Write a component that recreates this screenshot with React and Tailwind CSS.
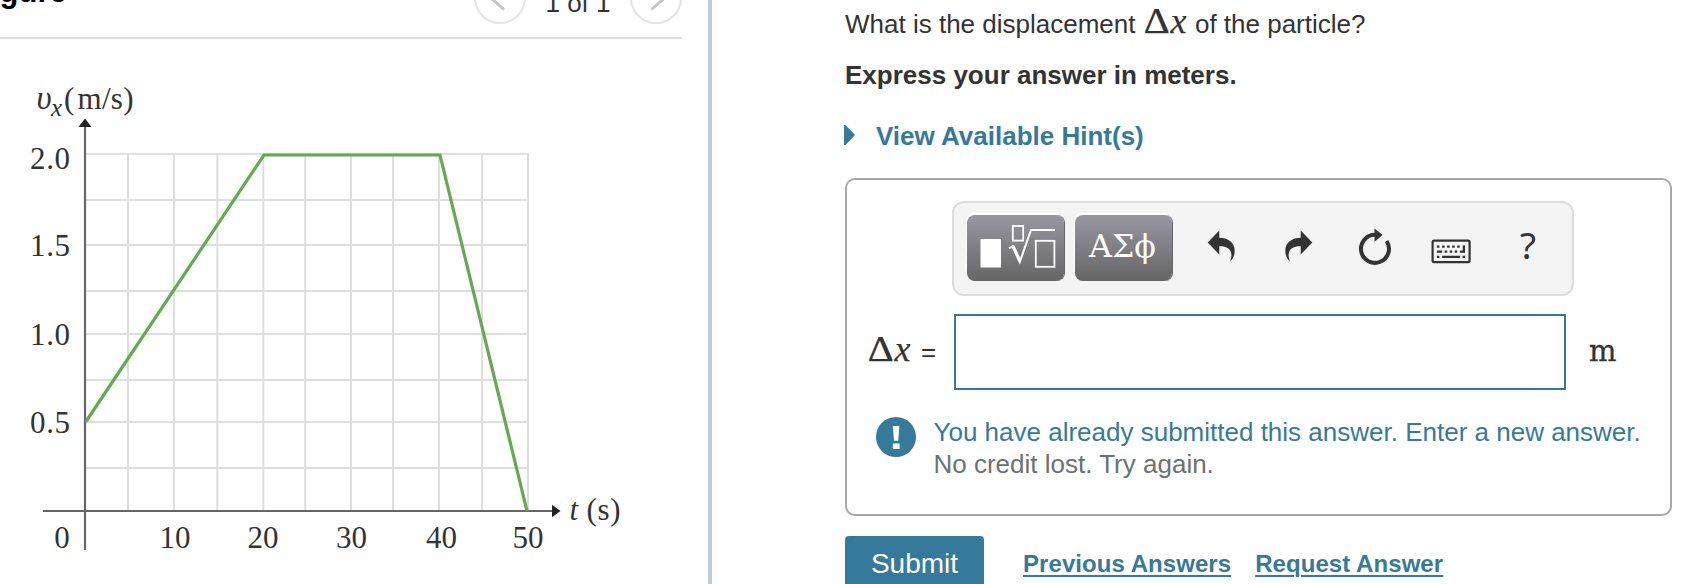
const SERIF = '"Liberation Serif", serif'
const MATH = '"DejaVu Math TeX Gyre", "Liberation Serif", serif'

const gridX = [128, 174, 217.3, 263.3, 305.2, 351, 393, 439, 482, 528]
const gridY = [154, 200, 245, 291, 334, 380, 422, 468]

const yLabels = [
  { text: '2.0', y: 168.5 },
  { text: '1.5', y: 256.3 },
  { text: '1.0', y: 344.8 },
  { text: '0.5', y: 433 },
]

const xLabels = [
  { text: '10', x: 175 },
  { text: '20', x: 263 },
  { text: '30', x: 351.5 },
  { text: '40', x: 441.5 },
  { text: '50', x: 528 },
]

function VelocityGraph() {
  return (
    <svg width="708" height="545" viewBox="0 39 708 545" fontFamily={SERIF} fontSize="31" fill="#333">
      {/* Grid */}
      <g stroke="#dedede" strokeWidth="2">
        {gridX.map((x) => (
          <line key={x} x1={x} y1="153" x2={x} y2="511" />
        ))}
        {gridY.map((y) => (
          <line key={y} x1="86" y1={y} x2="529" y2={y} />
        ))}
      </g>

      {/* Axes */}
      <g stroke="#666" strokeWidth="2.2">
        <line x1="85" y1="122" x2="85" y2="550" />
        <line x1="43" y1="511" x2="556" y2="511" />
      </g>
      <path d="M85 118.5L91.5 127H78.5Z" fill="#222" />
      <path d="M560.5 511L552 504.8V517.2Z" fill="#222" />

      {/* Data */}
      <path d="M86 421.5L264 155H440L527 511" fill="none" stroke="#63aa53" strokeWidth="3.2" />

      {/* Labels */}
      <text x="36.5" y="109" fontStyle="italic" fontSize="33">υ</text>
      <text x="51" y="115.5" fontStyle="italic" fontSize="25">x</text>
      <text x="64" y="109">(</text>
      <text x="77.5" y="109" textLength="56">m/s)</text>
      {yLabels.map((l) => (
        <text key={l.text} x="30" y={l.y} textLength="40">{l.text}</text>
      ))}
      <text x="62" y="548.3" textAnchor="middle">0</text>
      {xLabels.map((l) => (
        <text key={l.text} x={l.x} y="548.3" textAnchor="middle">{l.text}</text>
      ))}
      <text x="569.5" y="520" fontStyle="italic">t</text>
      <text x="586.5" y="520" textLength="34">(s)</text>
    </svg>
  )
}

function PagerButton({ d }) {
  return (
    <svg width="52" height="52" viewBox="0 0 52 52" fill="none">
      <circle cx="26" cy="26" r="25" stroke="#e4e4e4" strokeWidth="2" />
      <path d={d} stroke="#c4c4c4" strokeWidth="3" />
    </svg>
  )
}

function FigurePanel() {
  return (
    <section className="w-[708px] shrink-0 overflow-hidden">
      <header className="flex h-[39px] w-[682px] items-start justify-between border-b-2 border-[#ddd]">
        <h2 className="-ml-[28px] -mt-[25px] text-[31px] leading-[34px] font-bold text-black">Figure</h2>
        <div className="-mt-[28px] flex items-center">
          <PagerButton d="M30 14.5L17 26L30 37.5" />
          <span className="w-[104px] pt-[9px] text-center text-[26px] leading-[30px]">1 of 1</span>
          <PagerButton d="M21.5 14.5L34.5 26L21.5 37.5" />
        </div>
      </header>
      <VelocityGraph />
    </section>
  )
}

// Inline math symbol, sits on the text baseline
function DeltaX() {
  return (
    <svg className="inline overflow-visible align-baseline" width="43" height="23" viewBox="0 0 43 23" fontFamily={SERIF} fill="#333" stroke="#333" strokeWidth="0.25">
      <text x="-0.3" y="22.7" fontSize="35" textLength="26" lengthAdjust="spacingAndGlyphs">Δ</text>
      <text x="26.5" y="22.7" fontSize="36" fontStyle="italic">x</text>
    </svg>
  )
}

function TemplateButton() {
  return (
    <button className="h-[66px] w-[97px] rounded-[8px] bg-linear-to-b from-[#9997a1] to-[#666] shadow-[1px_0_0_#666,-1px_-2px_0_#fff]">
      <svg width="97" height="66" viewBox="0 0 97 66" fill="none" stroke="#fff">
        <rect x="13.5" y="24" width="20.5" height="28.5" fill="#fff" stroke="none" />
        <rect x="45.8" y="11" width="10.4" height="14.6" strokeWidth="1.8" />
        <path d="M42 33.5L46 31L52.8 47L64 15H88" strokeWidth="2" />
        <path d="M46 31L52.8 46" strokeWidth="3.2" />
        <rect x="68.8" y="25.8" width="18.6" height="26" strokeWidth="1.8" />
      </svg>
    </button>
  )
}

function GreekButton() {
  return (
    <button className="h-[66px] w-[97px] rounded-[8px] bg-linear-to-b from-[#9997a1] to-[#666] shadow-[1px_0_0_#666,-1px_-2px_0_#fff]">
      <svg width="97" height="66" viewBox="0 0 97 66" fill="#fff">
        <text x="14" y="42.3" fontFamily='"DejaVu Serif Condensed", "DejaVu Serif", serif' fontSize="32.5" textLength="67" lengthAdjust="spacingAndGlyphs">ΑΣϕ</text>
      </svg>
    </button>
  )
}

// Toolbar glyphs share a 40x40 box
function ToolIcon({ children }) {
  return (
    <svg className="overflow-visible" width="40" height="40" viewBox="0 0 40 40" fill="#333">
      {children}
    </svg>
  )
}

const ARROW = 'M6.7 14.5L18.3 2.5V9.8C27 9.8 33.7 14.5 33.7 22.8C33.7 27 32 31 29 33.8C30.5 29.5 31 26 29.5 23C28 20 24.5 18.2 18.3 18.2V26.5Z'

function Toolbar() {
  return (
    <div className="ml-[105px] flex h-[95px] w-[622px] items-center rounded-[12px] border-2 border-[#dcdcdc] bg-[#f4f4f4] pb-px pl-[13px]">
      <div className="flex gap-[11px]">
        <TemplateButton />
        <GreekButton />
      </div>
      <div className="ml-[29px] flex gap-[37px]">
        <ToolIcon>
          <path d={ARROW} />
        </ToolIcon>
        <ToolIcon>
          <path d={ARROW} transform="translate(41 0) scale(-1 1)" />
        </ToolIcon>
        <ToolIcon>
          <path d="M20 6.8A14 14 0 1 0 31.6 13" fill="none" stroke="#333" strokeWidth="4" />
          <path d="M19.5 0.5L27.6 7L19.5 13.8Z" />
        </ToolIcon>
        <ToolIcon>
          <g transform="translate(-0.6 1.6)" stroke="#333" fill="none">
            <rect x="1.2" y="11" width="37" height="21.5" rx="1.5" strokeWidth="2.2" />
            <path d="M5.5 17H8M10.7 17H13.2M15.7 17H18.2M20.8 17H23.3M25.8 17H28.3M5.5 22H10.8M13.3 22H15.8M18.3 22H20.8M23.3 22H25.8M28.5 22H33.5M5.5 27.2H8M10.7 27.2H28.7M31.2 27.2H33.7" strokeWidth="2.3" />
            <path d="M32.5 15.8V23" strokeWidth="2.3" />
          </g>
        </ToolIcon>
        <ToolIcon>
          <text x="19" y="31" textAnchor="middle" fontFamily='"Noto Sans", sans-serif' fontSize="37">?</text>
        </ToolIcon>
      </div>
    </div>
  )
}

function AnswerBox() {
  return (
    <div className="mt-[26px] h-[338px] w-[827px] rounded-[10px] border-2 border-[#a9a9a9] pt-[21px]">
      <Toolbar />

      {/* Answer entry */}
      <div className="mt-[18px] flex h-[76px] items-center">
        <div className="w-[107px] pl-[21px] leading-[40px] whitespace-nowrap">
          <DeltaX />
          <span className="ml-[10px]">=</span>
        </div>
        <input className="h-[76px] w-[612px] border-2 border-[#367a9b] outline-none" />
        <span className="mt-[2px] ml-[23px] text-[29px] leading-[40px] [-webkit-text-stroke:0.3px]" style={{ fontFamily: MATH }}>m</span>
      </div>

      {/* Feedback */}
      <div className="mt-[26px] flex">
        <svg className="mt-px ml-[29px]" width="40" height="40" viewBox="0 0 40 40">
          <circle cx="20" cy="20" r="20" fill="#367a9b" />
          <path d="M16.8 9H23.4L22.2 23.8H18Z" fill="#fff" />
          <rect x="16.8" y="26.5" width="6.8" height="5.5" fill="#fff" />
        </svg>
        <div className="ml-[17.5px] leading-[32px] whitespace-nowrap">
          <p className="text-[#367a9b]">You have already submitted this answer. Enter a new answer.</p>
          <p className="text-[#6c7272]">No credit lost. Try again.</p>
        </div>
      </div>
    </div>
  )
}

function QuestionPanel() {
  return (
    <section className="flex-1 pl-[133px] text-[26px] leading-[32px]">
      <p className="mt-[8px] h-[32px]">
        What is the displacement <span className="mx-px"><DeltaX /></span> of the particle?
      </p>
      <p className="mt-[19px] font-bold">Express your answer in meters.</p>
      <a className="mt-[29px] flex items-center font-bold text-[#367a9b]">
        <svg className="-mt-[3px] -ml-px" width="11" height="20" viewBox="0 0 11 20" fill="currentColor">
          <path d="M0 0H1.5L11 10L1.5 20H0Z" />
        </svg>
        <span className="ml-[21px]">View Available Hint(s)</span>
      </a>
      <AnswerBox />
      <div className="mt-[20px] flex">
        <button className="h-[56px] w-[139px] rounded-[4px] bg-[#367a9b] text-[28px] leading-[56px] text-white">
          Submit
        </button>
        <a className="mt-[12px] ml-[39px] text-[24px] font-bold tracking-[0.06px] text-[#367a9b] underline decoration-2 underline-offset-3">Previous Answers</a>
        <a className="mt-[12px] ml-[24px] text-[24px] font-bold tracking-[0.06px] text-[#367a9b] underline decoration-2 underline-offset-3">Request Answer</a>
      </div>
    </section>
  )
}

export default function App() {
  return (
    <main
      className="flex h-[584px] w-[1700px] overflow-hidden bg-white text-[#333]"
      style={{ fontFamily: '"Liberation Sans", Arial, sans-serif' }}
    >
      <FigurePanel />
      <div className="w-[4px] shrink-0 bg-[#bccadf]" />
      <QuestionPanel />
    </main>
  )
}
